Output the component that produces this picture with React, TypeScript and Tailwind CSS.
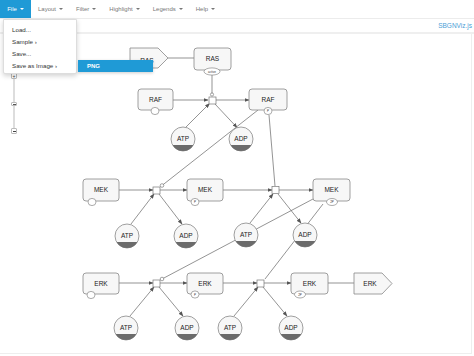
import React from "react";

type Pt = [number, number];

const Box = ({ x, y, w, h, label }: { x: number; y: number; w: number; h: number; label: string }) => (
  <g>
    <rect x={x} y={y} width={w} height={h} rx={3} fill="#f7f7f7" stroke="#888" strokeWidth={0.8} />
    <text x={x + w / 2} y={y + h / 2 + 2.3} textAnchor="middle" fontSize={6.5} fill="#222">
      {label}
    </text>
  </g>
);

const Tag = ({ pts, label, lx, ly }: { pts: string; label: string; lx: number; ly: number }) => (
  <g>
    <polygon points={pts} fill="#f7f7f7" stroke="#888" strokeWidth={0.8} />
    <text x={lx} y={ly} textAnchor="middle" fontSize={6.5} fill="#222">
      {label}
    </text>
  </g>
);

const Small = ({ cx, cy, label, rx = 4, ry = 3.6 }: { cx: number; cy: number; label?: string; rx?: number; ry?: number }) => (
  <g>
    <ellipse cx={cx} cy={cy} rx={rx} ry={ry} fill="#fff" stroke="#888" strokeWidth={0.7} />
    {label && (
      <text x={cx} y={cy + 1.1} textAnchor="middle" fontSize={3} fill="#333">
        {label}
      </text>
    )}
  </g>
);

const Mol = ({ cx, cy, label }: { cx: number; cy: number; label: string }) => {
  const r = 12;
  const h = 6;
  const dx = Math.sqrt(r * r - h * h);
  return (
    <g>
      <circle cx={cx} cy={cy} r={r} fill="#f7f7f7" stroke="#888" strokeWidth={0.8} />
      <path d={`M ${cx - dx} ${cy + h} A ${r} ${r} 0 0 0 ${cx + dx} ${cy + h} Z`} fill="#6b6b6b" />
      <text x={cx} y={cy + 2.2} textAnchor="middle" fontSize={6.5} fill="#222">
        {label}
      </text>
    </g>
  );
};

const Sq = ({ cx, cy }: { cx: number; cy: number }) => (
  <rect x={cx - 3.5} y={cy - 3.5} width={7} height={7} fill="#fff" stroke="#777" strokeWidth={0.7} />
);

const Line = ({ a, b, arrow }: { a: Pt; b: Pt; arrow?: boolean }) => (
  <line
    x1={a[0]}
    y1={a[1]}
    x2={b[0]}
    y2={b[1]}
    stroke="#666"
    strokeWidth={0.7}
    markerEnd={arrow ? "url(#arr)" : undefined}
  />
);

const Cat = ({ a, b }: { a: Pt; b: Pt }) => (
  <g>
    <line x1={a[0]} y1={a[1]} x2={b[0]} y2={b[1]} stroke="#666" strokeWidth={0.7} />
    <circle cx={b[0]} cy={b[1]} r={1.8} fill="#fff" stroke="#666" strokeWidth={0.6} />
  </g>
);

function Diagram() {
  return (
    <svg width={471} height={319} viewBox="0 34 471 319" className="block" style={{ fontFamily: "'Liberation Sans', Arial, sans-serif" }}>
      <defs>
        <marker id="arr" markerWidth="5" markerHeight="4" refX="4.5" refY="2" orient="auto" markerUnits="userSpaceOnUse">
          <path d="M0,0 L5,2 L0,4 Z" fill="#555" />
        </marker>
      </defs>

      {/* RAS row */}
      <Line a={[168, 58]} b={[194, 58]} />
      <Line a={[212, 75]} b={[212, 95]} />
      <Line a={[173, 100]} b={[208, 100]} arrow />
      <Line a={[216, 100]} b={[249, 100]} arrow />
      <Line a={[186, 127]} b={[209.5, 103.5]} arrow />
      <Line a={[215, 104]} b={[237, 127.5]} arrow />
      <Cat a={[258, 110]} b={[162, 185.5]} />
      <Line a={[269, 115]} b={[275, 186]} />

      <Tag pts="130,48 158,48 168,58 158,68 130,68" label="RAS" lx={147} ly={62.5} />
      <Box x={194} y={48} w={37} h={22} label="RAS" />
      <Small cx={212} cy={71.5} label="active" rx={8} ry={3.6} />
      <circle cx={212} cy={94.5} r={1.6} fill="#fff" stroke="#666" strokeWidth={0.6} />
      <Sq cx={212.5} cy={100.5} />
      <Box x={138} y={89} w={35} h={21} label="RAF" />
      <Small cx={155} cy={111} />
      <Box x={249} y={89} w={38} h={21} label="RAF" />
      <Small cx={268} cy={111} label="P" />
      <Mol cx={183} cy={139} label="ATP" />
      <Mol cx={241} cy={139} label="ADP" />

      {/* MEK row */}
      <Line a={[119, 190]} b={[153, 190]} arrow />
      <Line a={[160, 190]} b={[187, 190]} arrow />
      <Line a={[131, 224]} b={[154, 194]} arrow />
      <Line a={[159, 194]} b={[182, 224]} arrow />
      <Line a={[223, 190]} b={[272, 190]} arrow />
      <Line a={[279, 190]} b={[313, 190]} arrow />
      <Line a={[250, 223]} b={[273, 194]} arrow />
      <Line a={[278, 194]} b={[301, 223]} arrow />
      <Cat a={[313, 199]} b={[162, 279]} />
      <Line a={[323, 204]} b={[265, 279]} />

      <Box x={83} y={179} w={36} h={22} label="MEK" />
      <Small cx={92} cy={202} />
      <Sq cx={156.5} cy={190.5} />
      <Box x={187} y={179} w={36} h={22} label="MEK" />
      <Small cx={195} cy={202} label="P" />
      <Sq cx={275.5} cy={190} />
      <Box x={313} y={179} w={37} h={22} label="MEK" />
      <Small cx={332} cy={202} label="2P" rx={5.5} ry={3.5} />
      <Mol cx={127} cy={236} label="ATP" />
      <Mol cx={186} cy={236} label="ADP" />
      <Mol cx={246} cy={235} label="ATP" />
      <Mol cx={305} cy={235} label="ADP" />

      {/* ERK row */}
      <Line a={[119, 283]} b={[153, 283]} arrow />
      <Line a={[160, 283]} b={[187, 283]} arrow />
      <Line a={[130, 316]} b={[154, 287]} arrow />
      <Line a={[159, 287]} b={[183, 316]} arrow />
      <Line a={[223, 283]} b={[257, 283]} arrow />
      <Line a={[264, 283]} b={[291, 283]} arrow />
      <Line a={[234, 316]} b={[258, 287]} arrow />
      <Line a={[263, 287]} b={[287, 316]} arrow />
      <Line a={[328, 283]} b={[354, 283]} />

      <Box x={83} y={273} w={36} h={21} label="ERK" />
      <Small cx={91} cy={295} />
      <Sq cx={156.5} cy={283.5} />
      <Box x={187} y={273} w={36} h={21} label="ERK" />
      <Small cx={195} cy={294.5} label="P" />
      <Sq cx={260.5} cy={283.5} />
      <Box x={291} y={273} w={37} h={21} label="ERK" />
      <Small cx={300} cy={294.5} label="2P" rx={5.5} ry={3.5} />
      <Tag pts="354,273 382,273 392,283.5 382,294 354,294" label="ERK" lx={370} ly={285.5} />
      <Mol cx={126} cy={328} label="ATP" />
      <Mol cx={187} cy={328} label="ADP" />
      <Mol cx={230} cy={328} label="ATP" />
      <Mol cx={291} cy={328} label="ADP" />
    </svg>
  );
}

const Caret = ({ white }: { white?: boolean }) => (
  <span
    className={`inline-block w-0 h-0 border-l-[2px] border-r-[2px] border-t-[2px] border-l-transparent border-r-transparent ${
      white ? "border-t-white" : "border-t-[#777]"
    }`}
  />
);

const NavItem = ({ label }: { label: string }) => (
  <div className="flex items-center gap-[3px] px-[6.5px] text-[#777]">
    <span>{label}</span>
    <Caret />
  </div>
);

export default function App() {
  return (
    <div
      className="relative w-[474px] h-[356px] bg-white overflow-hidden flex flex-col"
      style={{ fontFamily: "'Liberation Sans', Arial, sans-serif" }}
    >
      {/* navbar */}
      <div className="h-[19px] flex items-stretch text-[6px] border-b border-[#ececec] shrink-0">
        <div className="flex items-center gap-[3px] bg-[#1f9ad6] text-white w-[31px] mr-[0.5px] justify-center">
          <span>File</span>
          <Caret white />
        </div>
        <NavItem label="Layout" />
        <NavItem label="Filter" />
        <NavItem label="Highlight" />
        <NavItem label="Legends" />
        <NavItem label="Help" />
      </div>
      {/* toolbar */}
      <div className="h-[13px] flex items-center justify-end pr-[2px] text-[6.5px] text-[#4a9ed6] shrink-0">
        SBGNViz.js
      </div>
      <div className="h-[2px] bg-[#efefef] shrink-0" />
      {/* canvas */}
      <div className="w-[472px] h-[320px] border-r border-b border-[#eeeeee] shrink-0">
        <Diagram />
      </div>

      {/* zoom slider */}
      <div className="absolute left-[11px] top-[73px] w-[6px] flex flex-col items-center">
        <div className="w-[6px] h-[6px] border border-[#bbb] rounded-[1px] bg-white flex items-center justify-center text-[5px] leading-none text-[#444]">
          +
        </div>
        <div className="w-[2px] h-[23px] bg-[#ddd]" />
        <div className="w-[6px] h-[4px] border border-[#bbb] rounded-[1px] bg-white flex items-center justify-center">
          <div className="w-[3px] h-[1px] bg-[#555]" />
        </div>
        <div className="w-[2px] h-[22px] bg-[#ddd]" />
        <div className="w-[6px] h-[6px] border border-[#bbb] rounded-[1px] bg-white flex items-center justify-center">
          <div className="w-[3px] h-[1px] bg-[#444]" />
        </div>
      </div>

      {/* dropdown */}
      <div className="absolute left-[3px] top-[19px] w-[74px] h-[55px] bg-white border border-[#ddd] rounded-b-[2px] shadow-[0_2px_5px_rgba(0,0,0,0.18)] pt-[4px] text-[6.2px] text-[#333]">
        <div className="h-[12px] flex items-center pl-[8px]">Load...</div>
        <div className="h-[12px] flex items-center pl-[8px]">Sample ›</div>
        <div className="h-[12px] flex items-center pl-[8px]">Save...</div>
        <div className="h-[12px] flex items-center pl-[8px]">Save as Image ›</div>
      </div>
      {/* submenu */}
      <div className="absolute left-[78px] top-[60px] w-[75px] h-[12px] bg-[#1f9ad6] shadow-[0_1px_3px_rgba(0,0,0,0.2)] flex items-center pl-[9px] text-[6px] font-bold text-white">
        PNG
      </div>
    </div>
  );
}
